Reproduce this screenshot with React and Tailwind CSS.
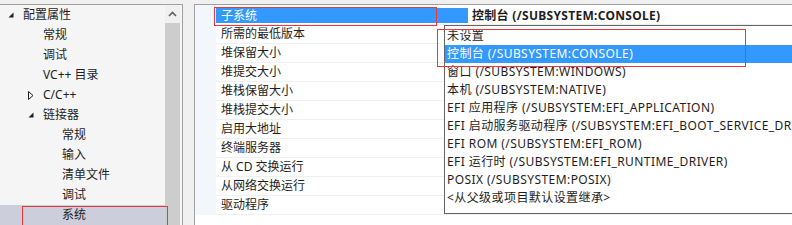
import React from "react";

const tree = [
  { label: "配置属性", level: 0, arrow: "open" },
  { label: "常规", level: 1 },
  { label: "调试", level: 1 },
  { label: "VC++ 目录", level: 1 },
  { label: "C/C++", level: 1, arrow: "closed" },
  { label: "链接器", level: 1, arrow: "open" },
  { label: "常规", level: 2 },
  { label: "输入", level: 2 },
  { label: "清单文件", level: 2 },
  { label: "调试", level: 2 },
  { label: "系统", level: 2, selected: true },
];

const props = [
  "所需的最低版本",
  "堆保留大小",
  "堆提交大小",
  "堆栈保留大小",
  "堆栈提交大小",
  "启用大地址",
  "终端服务器",
  "从 CD 交换运行",
  "从网络交换运行",
  "驱动程序",
];

const options = [
  "未设置",
  "控制台 (/SUBSYSTEM:CONSOLE)",
  "窗口 (/SUBSYSTEM:WINDOWS)",
  "本机 (/SUBSYSTEM:NATIVE)",
  "EFI 应用程序 (/SUBSYSTEM:EFI_APPLICATION)",
  "EFI 启动服务驱动程序 (/SUBSYSTEM:EFI_BOOT_SERVICE_DRIVER)",
  "EFI ROM (/SUBSYSTEM:EFI_ROM)",
  "EFI 运行时 (/SUBSYSTEM:EFI_RUNTIME_DRIVER)",
  "POSIX (/SUBSYSTEM:POSIX)",
  "<从父级或项目默认设置继承>",
];

const Arrow = ({ type }) =>
  type === "open" ? (
    <svg width="6" height="6" viewBox="0 0 6 6">
      <polygon points="5.5,0.5 5.5,5.5 0.5,5.5" fill="#1e1e1e" />
    </svg>
  ) : (
    <svg width="6" height="9" viewBox="0 0 6 9">
      <polygon points="0.5,0.5 5,4.5 0.5,8.5" fill="none" stroke="#1e1e1e" strokeWidth="1" />
    </svg>
  );

const indent = ["pl-[8px]", "pl-[28px]", "pl-[47px]"];

export default function App() {
  return (
    <div className="relative w-[792px] h-[225px] overflow-hidden bg-[#f0f0f0] pt-[4px] flex text-[12px] text-[#1e1e1e] font-['Noto_Sans','Noto_Sans_CJK_SC',sans-serif] leading-none">
      {/* Tree panel */}
      <div className="w-[183px] shrink-0 border-t border-r border-[#a0a0a0] bg-[#f5f5f5] flex">
        <div className="flex-1 flex flex-col">
          {tree.map((t, i) => (
            <div
              key={i}
              className={`h-[20px] shrink-0 flex items-center ${indent[t.level]} ${t.selected ? "bg-[#cccedb]" : ""}`}
            >
              <span className="w-[15px] flex items-center">
                {t.arrow && <Arrow type={t.arrow} />}
              </span>
              <span>{t.label}</span>
            </div>
          ))}
        </div>
        <div className="w-[15px] mr-[2px] flex flex-col bg-[#f0f0f0]">
          <div className="h-[18px] flex items-center justify-center">
            <svg width="9" height="6" viewBox="0 0 9 6">
              <polyline points="1,5 4.5,1.5 8,5" fill="none" stroke="#606060" strokeWidth="1.6" />
            </svg>
          </div>
          <div className="flex-1 bg-[#cdcdcd]" />
        </div>
      </div>

      {/* Property grid */}
      <div className="ml-[11px] flex-1 border-t border-l border-[#a0a0a0] bg-white flex flex-col">
        <div className="flex">
          <div className="w-[21px] bg-[#f3f7fc] shrink-0" />
          <div className="flex-1 flex flex-col">
            <div className="h-[20px] flex pt-[3px] pb-[1px] border-b border-[#f0f0f0]">
              <div className="w-[252px] bg-[#3399ff] text-white flex items-center pl-[5px]">子系统</div>
              <div className="flex-1 flex items-center pl-[4px] font-bold tracking-[0.3px]">控制台 (/SUBSYSTEM:CONSOLE)</div>
            </div>
            {props.map((p, i) => (
              <div key={i} className="h-[19px] flex items-center pl-[5px] border-b border-[#eef0f4]">
                {p}
              </div>
            ))}
          </div>
        </div>
      </div>

      {/* Dropdown list */}
      <div className="absolute left-[444px] top-[25px] w-[400px] h-[189px] bg-white border border-[#646464] pt-[1px] tracking-[0.42px]">
        {options.map((o, i) => (
          <div
            key={i}
            className={`h-[18px] flex items-center pl-[2px] whitespace-nowrap ${i === 1 ? "bg-[#3399ff] text-white" : ""}`}
          >
            {o}
          </div>
        ))}
      </div>

      {/* Red highlight boxes */}
      <div className="absolute left-[214px] top-[7px] w-[223px] h-[19px] border border-[#e83a3a]" />
      <div className="absolute left-[437px] top-[29px] w-[309px] h-[38px] border border-[#e83a3a]" />
      <div className="absolute left-[22px] top-[206px] w-[146px] h-[30px] border border-[#e83a3a]" />
    </div>
  );
}
